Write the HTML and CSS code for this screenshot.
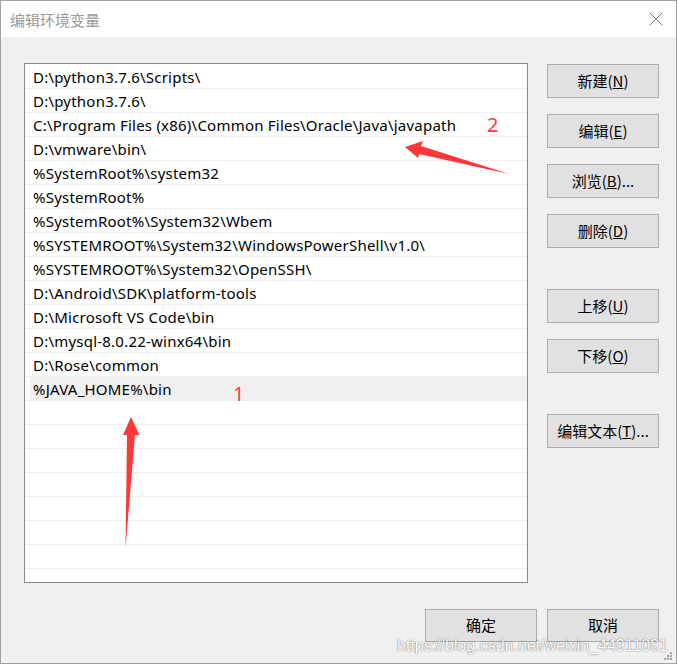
FILE: index.html
```html
<!DOCTYPE html>
<html lang="zh-CN">
<head>
  <meta charset="UTF-8">
  <meta name="viewport" content="width=device-width, initial-scale=1.0">
  <title>编辑环境变量</title>
  <link rel="stylesheet" href="styles.css">
</head>
<body>
  <div class="window">
    <div class="titlebar">
      <span class="title">编辑环境变量</span>
      <svg class="close" width="16" height="16" viewBox="0 0 16 16">
        <path d="M1.5 1.5 L14.5 14.5 M14.5 1.5 L1.5 14.5" stroke="#7a7a7a" stroke-width="1" fill="none"/>
      </svg>
    </div>

    <div class="content">
      <div class="main">
        <!-- path list -->
        <div class="path-list">
          <div class="row">D:\python3.7.6\Scripts\</div>
          <div class="row">D:\python3.7.6\</div>
          <div class="row">C:\Program Files (x86)\Common Files\Oracle\Java\javapath</div>
          <div class="row">D:\vmware\bin\</div>
          <div class="row">%SystemRoot%\system32</div>
          <div class="row">%SystemRoot%</div>
          <div class="row">%SystemRoot%\System32\Wbem</div>
          <div class="row">%SYSTEMROOT%\System32\WindowsPowerShell\v1.0\</div>
          <div class="row">%SYSTEMROOT%\System32\OpenSSH\</div>
          <div class="row">D:\Android\SDK\platform-tools</div>
          <div class="row">D:\Microsoft VS Code\bin</div>
          <div class="row">D:\mysql-8.0.22-winx64\bin</div>
          <div class="row">D:\Rose\common</div>
          <div class="row selected">%JAVA_HOME%\bin</div>
          <div class="row"></div>
          <div class="row"></div>
          <div class="row"></div>
          <div class="row"></div>
          <div class="row"></div>
          <div class="row"></div>
          <div class="row"></div>
        </div>

        <div class="side">
          <button class="btn">新建(<u>N</u>)</button>
          <button class="btn">编辑(<u>E</u>)</button>
          <button class="btn">浏览(<u>B</u>)...</button>
          <button class="btn">删除(<u>D</u>)</button>
          <button class="btn group">上移(<u>U</u>)</button>
          <button class="btn">下移(<u>O</u>)</button>
          <button class="btn group">编辑文本(<u>T</u>)...</button>
        </div>
      </div>

      <div class="footer">
        <button class="btn">确定</button>
        <button class="btn">取消</button>
      </div>

      <div class="watermark">https://blog.csdn.net/weixin_44911081</div>
      <svg class="grip" width="10" height="10" viewBox="0 0 10 10">
        <rect x="7" y="1" width="2" height="2" fill="#a0a0a0"/>
        <rect x="4" y="4" width="2" height="2" fill="#a0a0a0"/>
        <rect x="7" y="4" width="2" height="2" fill="#a0a0a0"/>
        <rect x="1" y="7" width="2" height="2" fill="#a0a0a0"/>
        <rect x="4" y="7" width="2" height="2" fill="#a0a0a0"/>
        <rect x="7" y="7" width="2" height="2" fill="#a0a0a0"/>
      </svg>
    </div>

    <!-- red annotations drawn over the dialog -->
    <svg class="annot" width="677" height="664" viewBox="0 0 677 664">
      <polygon points="405,147 423,141 421,146 509,174 419,154 418,158" fill="#ff3737"/>
      <polygon points="131,417 139.5,435 135,435 125.5,548 127,435 123,435" fill="#ff3737"/>
    </svg>
    <span class="mark mark-2">2</span>
    <span class="mark mark-1">1</span>
  </div>
</body>
</html>
```

FILE: styles.css
```css
body {
  margin: 0;
  padding: 0;
  font-family: "Noto Sans", "Noto Sans CJK SC", sans-serif;
  color: #000;
}

.window {
  position: relative;
  width: 677px;
  height: 664px;
  box-sizing: border-box;
  border: 1px solid #a0a0a0;
  display: flex;
  flex-direction: column;
  background: #f0f0f0;
  overflow: hidden;
}

.titlebar {
  height: 36px;
  background: #fff;
  display: flex;
  align-items: center;
  justify-content: space-between;
  padding: 0 12px 0 9px;
  flex-shrink: 0;
}

.title {
  font-family: "Noto Sans CJK SC", sans-serif;
  font-size: 15px;
  color: #9a9a9a;
}

.content {
  position: relative;
  flex: 1;
  padding: 26px 17px 0 23px;
  display: flex;
  flex-direction: column;
}

.main {
  display: flex;
  gap: 19px;
}

.path-list {
  width: 504px;
  height: 520px;
  box-sizing: border-box;
  border: 1px solid #828790;
  background: #fff;
  padding: 1px 0 0 1px;
  overflow: hidden;
}

.row {
  height: 24px;
  box-sizing: border-box;
  border-bottom: 1px solid #efefef;
  padding-left: 7px;
  font-size: 15px;
  letter-spacing: 0.22px;
  line-height: 24px;
  white-space: nowrap;
}

.row.selected {
  background: linear-gradient(to right, transparent 4px, #f0f0f0 4px);
}

.side {
  display: flex;
  flex-direction: column;
  padding-top: 1px;
}

.btn {
  width: 112px;
  height: 34px;
  box-sizing: border-box;
  border: 1px solid #adadad;
  background: #e1e1e1;
  font-family: "Noto Sans CJK SC", sans-serif;
  font-size: 15px;
  color: #000;
  padding: 0 0 2px;
  margin: 0;
}

.side .btn {
  margin-bottom: 16px;
}

.side .btn.group {
  margin-top: 25px;
}

.footer {
  display: flex;
  justify-content: flex-end;
  gap: 10px;
  margin-top: 26px;
}

.footer .btn {
  height: 33px;
}

.watermark {
  position: absolute;
  right: 8px;
  bottom: 8px;
  font-family: "Liberation Sans", sans-serif;
  font-size: 16px;
  color: #fff;
  text-shadow: 0 0 1px rgba(0, 0, 0, 0.55), 0 0 2px rgba(0, 0, 0, 0.25);
}

.grip {
  position: absolute;
  right: 3px;
  bottom: 2px;
}

.annot {
  position: absolute;
  top: -1px;
  left: -1px;
  pointer-events: none;
}

.mark {
  position: absolute;
  font-family: "Noto Sans", sans-serif;
  font-size: 20px;
  line-height: 20px;
  color: #ff3737;
}

.mark-2 {
  left: 486px;
  top: 114px;
}

.mark-1 {
  left: 232px;
  top: 383px;
}
```
